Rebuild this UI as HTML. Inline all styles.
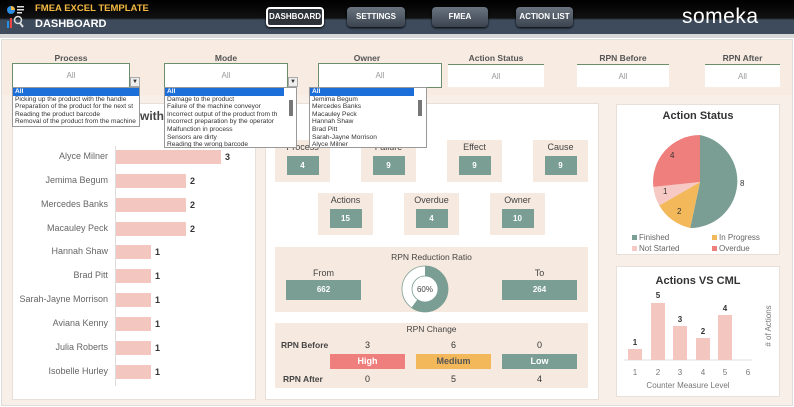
<!DOCTYPE html>
<html><head><meta charset="utf-8">
<style>
*{box-sizing:border-box;margin:0;padding:0}
body{width:794px;height:407px;overflow:hidden;background:#fff;font-family:"Liberation Sans",sans-serif;position:relative;color:#333}
.a{position:absolute}
.hdr{left:0;top:0;width:794px;height:34px;background:linear-gradient(#000 0,#111 18px,#3d4b5d 20px,#3d4b5d 100%)}
.btn{position:absolute;top:7px;height:20px;border-radius:4px;background:linear-gradient(#6a7480,#3a434e);color:#fff;font-size:8px;font-weight:bold;text-align:center;line-height:20px;box-shadow:0 1px 2px #000}
.lbl{position:absolute;font-size:8.5px;font-weight:bold;color:#555;text-align:center}
.fbox{position:absolute;background:#fff;font-size:8px;color:#999;text-align:center;line-height:24px;border-top:1px solid #6b8f6b}
.dd{position:absolute;background:#fff;border:1px solid #999;font-size:6.6px;line-height:7.6px;color:#333;white-space:nowrap;overflow:hidden;padding-left:2px}
.dd .s{background:#1c6ed8;color:#fff;font-weight:bold;margin-left:-2px;padding-left:2px}
.arr{position:absolute;width:10px;height:10px;background:#eee;border:1px solid #aaa;font-size:6px;line-height:8px;text-align:center;color:#333}
.panel{position:absolute;background:#fff;border:1px solid #e8e0d8}
.tile{position:absolute;background:#f6e9df;width:55px;height:42px;text-align:center;font-size:9px;color:#444}
.tile b{display:block;margin:4px auto 0;width:32px;height:19px;background:#7a9e94;color:#fff;font-size:8px;line-height:19px}
.tile span{display:block;margin-top:2px}
.name{position:absolute;right:686px;font-size:9px;color:#666;text-align:right;white-space:nowrap}
.bar{position:absolute;left:116px;height:14px;background:#f3c6bf}
.bv{position:absolute;font-size:9px;color:#333;font-weight:bold}
</style></head><body>
<div class="a hdr"></div>
<svg class="a" style="left:6px;top:4px" width="22" height="26" viewBox="0 0 22 26">
<circle cx="5" cy="6" r="4" fill="#2a8de0"/><path d="M5 6 L5 2 A4 4 0 0 1 9 6Z" fill="#f4b942"/>
<rect x="11" y="2" width="7" height="1.5" fill="#ddd"/><rect x="11" y="5" width="7" height="1.5" fill="#ddd"/><rect x="11" y="8" width="5" height="1.5" fill="#ddd"/>
<rect x="1" y="17" width="2" height="7" fill="#2a8de0"/><rect x="4" y="14" width="2" height="10" fill="#e44"/>
<circle cx="12" cy="16" r="3.5" fill="none" stroke="#ddd" stroke-width="1.5"/><path d="M14 19 L17 23" stroke="#ddd" stroke-width="2"/></svg>
<div class="a" style="left:35px;top:3px;font-size:9.5px;font-weight:bold;color:#f4b942">FMEA EXCEL TEMPLATE</div>
<div class="a" style="left:35px;top:18px;font-size:11px;font-weight:bold;color:#fff">DASHBOARD</div>
<div class="btn" style="left:266px;width:58px;background:#2d3238;border:2px solid #fff;line-height:16px;top:7px">DASHBOARD</div>
<div class="btn" style="left:347px;width:58px">SETTINGS</div>
<div class="btn" style="left:432px;width:56px">FMEA</div>
<div class="btn" style="left:516px;width:57px">ACTION LIST</div>
<div class="a" style="left:682px;top:5px;font-size:21px;color:#fff;letter-spacing:0.5px">someka</div>
<div class="a" style="left:0;top:34px;width:794px;height:4px;background:#d8d8d8"></div>
<div class="a" style="left:1px;top:39px;width:792px;height:367px;background:#f8efe8;border:1px solid #ddd"></div>
<div class="a" style="left:2px;top:40px;width:790px;height:55px;background:#f7ebe2"></div>

<div class="lbl" style="left:12px;top:53px;width:118px">Process</div>
<div class="lbl" style="left:164px;top:53px;width:124px">Mode</div>
<div class="lbl" style="left:318px;top:53px;width:98px">Owner</div>
<div class="lbl" style="left:448px;top:53px;width:96px">Action Status</div>
<div class="lbl" style="left:577px;top:53px;width:92px">RPN Before</div>
<div class="lbl" style="left:705px;top:53px;width:75px">RPN After</div>
<div class="fbox" style="left:12px;top:63px;width:118px;height:25px;border:1px solid #6b8f6b">All</div>
<div class="fbox" style="left:164px;top:63px;width:124px;height:25px;border:1px solid #6b8f6b">All</div>
<div class="fbox" style="left:318px;top:63px;width:124px;height:25px;border:1px solid #6b8f6b">All</div>
<div class="fbox" style="left:448px;top:64px;width:96px;height:23px">All</div>
<div class="fbox" style="left:577px;top:64px;width:92px;height:23px">All</div>
<div class="fbox" style="left:705px;top:64px;width:75px;height:23px">All</div>
<div class="arr" style="left:130px;top:77px">▼</div>
<div class="arr" style="left:288px;top:77px">▼</div>

<div class="panel" style="left:12px;top:103px;width:244px;height:297px"></div>
<div class="a" style="left:140px;top:109px;font-size:12px;font-weight:bold;color:#444">with</div>
<div class="a" style="left:115px;top:146px;width:1px;height:240px;background:#ddd"></div>
<div class="name" style="top:151px">Alyce Milner</div><div class="bar" style="top:150px;width:105px"></div><div class="bv" style="left:225px;top:152px">3</div>
<div class="name" style="top:175px">Jemima Begum</div><div class="bar" style="top:174px;width:70px"></div><div class="bv" style="left:190px;top:176px">2</div>
<div class="name" style="top:199px">Mercedes Banks</div><div class="bar" style="top:198px;width:70px"></div><div class="bv" style="left:190px;top:200px">2</div>
<div class="name" style="top:223px">Macauley Peck</div><div class="bar" style="top:222px;width:70px"></div><div class="bv" style="left:190px;top:224px">2</div>
<div class="name" style="top:246px">Hannah Shaw</div><div class="bar" style="top:245px;width:35px"></div><div class="bv" style="left:155px;top:247px">1</div>
<div class="name" style="top:270px">Brad Pitt</div><div class="bar" style="top:269px;width:35px"></div><div class="bv" style="left:155px;top:271px">1</div>
<div class="name" style="top:294px">Sarah-Jayne Morrison</div><div class="bar" style="top:293px;width:35px"></div><div class="bv" style="left:155px;top:295px">1</div>
<div class="name" style="top:318px">Aviana Kenny</div><div class="bar" style="top:317px;width:35px"></div><div class="bv" style="left:155px;top:319px">1</div>
<div class="name" style="top:342px">Julia Roberts</div><div class="bar" style="top:341px;width:35px"></div><div class="bv" style="left:155px;top:343px">1</div>
<div class="name" style="top:366px">Isobelle Hurley</div><div class="bar" style="top:365px;width:35px"></div><div class="bv" style="left:155px;top:367px">1</div>

<div class="panel" style="left:265px;top:103px;width:334px;height:297px"></div>
<div class="a" style="left:310px;top:114px;font-size:12px;font-weight:bold;color:#444">SUMMARY</div>
<div class="tile" style="left:275px;top:140px"><span>Process</span><b>4</b></div>
<div class="tile" style="left:361px;top:140px"><span>Failure</span><b>9</b></div>
<div class="tile" style="left:447px;top:140px"><span>Effect</span><b>9</b></div>
<div class="tile" style="left:533px;top:140px"><span>Cause</span><b>9</b></div>
<div class="tile" style="left:318px;top:193px"><span>Actions</span><b>15</b></div>
<div class="tile" style="left:404px;top:193px"><span>Overdue</span><b>4</b></div>
<div class="tile" style="left:490px;top:193px"><span>Owner</span><b>10</b></div>
<div class="a" style="left:275px;top:247px;width:313px;height:65px;background:#f6e9df"></div>
<div class="a" style="left:275px;top:252px;width:313px;text-align:center;font-size:8.5px;color:#444">RPN Reduction Ratio</div>
<div class="a" style="left:286px;top:268px;width:75px;text-align:center;font-size:9px;color:#444">From</div>
<div class="a" style="left:286px;top:280px;width:75px;height:20px;background:#7a9e94;color:#fff;font-size:8px;font-weight:bold;text-align:center;line-height:20px">662</div>
<div class="a" style="left:502px;top:268px;width:75px;text-align:center;font-size:9px;color:#444">To</div>
<div class="a" style="left:502px;top:280px;width:75px;height:20px;background:#7a9e94;color:#fff;font-size:8px;font-weight:bold;text-align:center;line-height:20px">264</div>
<svg class="a" style="left:399px;top:264px" width="52" height="50" viewBox="0 0 52 50">
<circle cx="26" cy="25" r="23" fill="#fff"/>
<path d="M26 2 A23 23 0 1 1 12.5 43.6 L18.4 35.5 A13 13 0 1 0 26 12Z" fill="#7a9e94"/>
<circle cx="26" cy="25" r="23" fill="none" stroke="#7a9e94" stroke-width="0.8"/>
<circle cx="26" cy="25" r="13" fill="#fff" stroke="#7a9e94" stroke-width="0.8"/>
<text x="26" y="28" font-size="8" text-anchor="middle" fill="#444" font-family="Liberation Sans">60%</text></svg>
<div class="a" style="left:275px;top:323px;width:313px;height:65px;background:#f6e9df"></div>
<div class="a" style="left:275px;top:324px;width:313px;text-align:center;font-size:8.5px;color:#444">RPN Change</div>
<div class="a" style="left:281px;top:340px;font-size:8.5px;font-weight:bold;color:#444">RPN Before</div>
<div class="a" style="left:283px;top:374px;font-size:8.5px;font-weight:bold;color:#444">RPN After</div>
<div class="a" style="left:330px;top:340px;width:75px;text-align:center;font-size:9px">3</div>
<div class="a" style="left:416px;top:340px;width:75px;text-align:center;font-size:9px">6</div>
<div class="a" style="left:502px;top:340px;width:75px;text-align:center;font-size:9px">0</div>
<div class="a" style="left:330px;top:374px;width:75px;text-align:center;font-size:9px">0</div>
<div class="a" style="left:416px;top:374px;width:75px;text-align:center;font-size:9px">5</div>
<div class="a" style="left:502px;top:374px;width:75px;text-align:center;font-size:9px">4</div>
<div class="a" style="left:330px;top:354px;width:75px;height:15px;background:#ef7f7c;color:#fff;font-size:9px;font-weight:bold;text-align:center;line-height:15px">High</div>
<div class="a" style="left:416px;top:354px;width:75px;height:15px;background:#f2b85a;color:#555;font-size:9px;font-weight:bold;text-align:center;line-height:15px">Medium</div>
<div class="a" style="left:502px;top:354px;width:75px;height:15px;background:#7a9e94;color:#fff;font-size:9px;font-weight:bold;text-align:center;line-height:15px">Low</div>

<div class="panel" style="left:616px;top:104px;width:164px;height:151px"></div>
<div class="a" style="left:616px;top:110px;width:164px;text-align:center;font-size:11px;font-weight:bold;color:#333">Action Status</div>
<svg class="a" style="left:616px;top:104px" width="164" height="151" viewBox="616 104 164 151" font-family="Liberation Sans">
<path d="M700 182 L700 135 A47 47 0 0 1 690.2 228 Z" fill="#7a9e94"/>
<path d="M700 182 L690.2 228 A47 47 0 0 1 659.3 205.5 Z" fill="#f2b85a"/>
<path d="M700 182 L659.3 205.5 A47 47 0 0 1 653.3 186.9 Z" fill="#f6c9c4"/>
<path d="M700 182 L653.3 186.9 A47 47 0 0 1 700 135 Z" fill="#ef7f7c"/>
<text x="740" y="186" font-size="8" fill="#333">8</text>
<text x="677" y="214" font-size="8" fill="#333">2</text>
<text x="663" y="194" font-size="8" fill="#333">1</text>
<text x="670" y="158" font-size="8" fill="#333">4</text>
<rect x="632" y="235" width="5" height="5" fill="#7a9e94"/><text x="639" y="240" font-size="8" fill="#666">Finished</text>
<rect x="712" y="235" width="5" height="5" fill="#f2b85a"/><text x="719" y="240" font-size="8" fill="#666">In Progress</text>
<rect x="632" y="246" width="5" height="5" fill="#f6c9c4"/><text x="639" y="251" font-size="8" fill="#666">Not Started</text>
<rect x="712" y="246" width="5" height="5" fill="#ef7f7c"/><text x="719" y="251" font-size="8" fill="#666">Overdue</text>
</svg>
<div class="panel" style="left:616px;top:266px;width:164px;height:131px"></div>
<svg class="a" style="left:616px;top:266px" width="164" height="131" viewBox="616 266 164 131" font-family="Liberation Sans">
<text x="698" y="284" font-size="11" font-weight="bold" fill="#333" text-anchor="middle">Actions VS CML</text>
<line x1="624" y1="360" x2="752" y2="360" stroke="#ddd"/>
<rect x="628" y="349" width="14" height="11" fill="#f3c6bf"/>
<rect x="651" y="303" width="14" height="57" fill="#f3c6bf"/>
<rect x="673" y="326" width="14" height="34" fill="#f3c6bf"/>
<rect x="696" y="338" width="14" height="22" fill="#f3c6bf"/>
<rect x="718" y="315" width="14" height="45" fill="#f3c6bf"/>
<g font-size="8" font-weight="bold" fill="#333" text-anchor="middle">
<text x="635" y="345">1</text><text x="658" y="298">5</text><text x="680" y="322">3</text><text x="703" y="334">2</text><text x="725" y="311">4</text></g>
<g font-size="8" fill="#777" text-anchor="middle">
<text x="635" y="375">1</text><text x="658" y="375">2</text><text x="680" y="375">3</text><text x="703" y="375">4</text><text x="725" y="375">5</text><text x="748" y="375">6</text>
<text x="688" y="388">Counter Measure Level</text>
<text x="0" y="0" transform="translate(771 326) rotate(-90)"># of Actions</text></g>
</svg>

<div class="dd" style="left:12px;top:87px;width:128px;height:40px"><div class="s">All</div>Picking up the product with the handle<br>Preparation of the product for the next st<br>Reading the product barcode<br>Removal of the product from the machine</div>
<div class="dd" style="left:164px;top:87px;width:133px;height:61px"><div class="s" style="width:119px">All</div>Damage to the product<br>Failure of the machine conveyor<br>Incorrect output of the product from th<br>Incorrect preparation by the operator<br>Malfunction in process<br>Sensors are dirty<br>Reading the wrong barcode
<div class="a" style="left:124px;top:12px;width:4px;height:16px;background:#777"></div></div>
<div class="dd" style="left:309px;top:87px;width:118px;height:61px"><div class="s" style="width:104px">All</div>Jemima Begum<br>Mercedes Banks<br>Macauley Peck<br>Hannah Shaw<br>Brad Pitt<br>Sarah-Jayne Morrison<br>Alyce Milner
<div class="a" style="left:108px;top:12px;width:4px;height:16px;background:#777"></div></div>
</body></html>
